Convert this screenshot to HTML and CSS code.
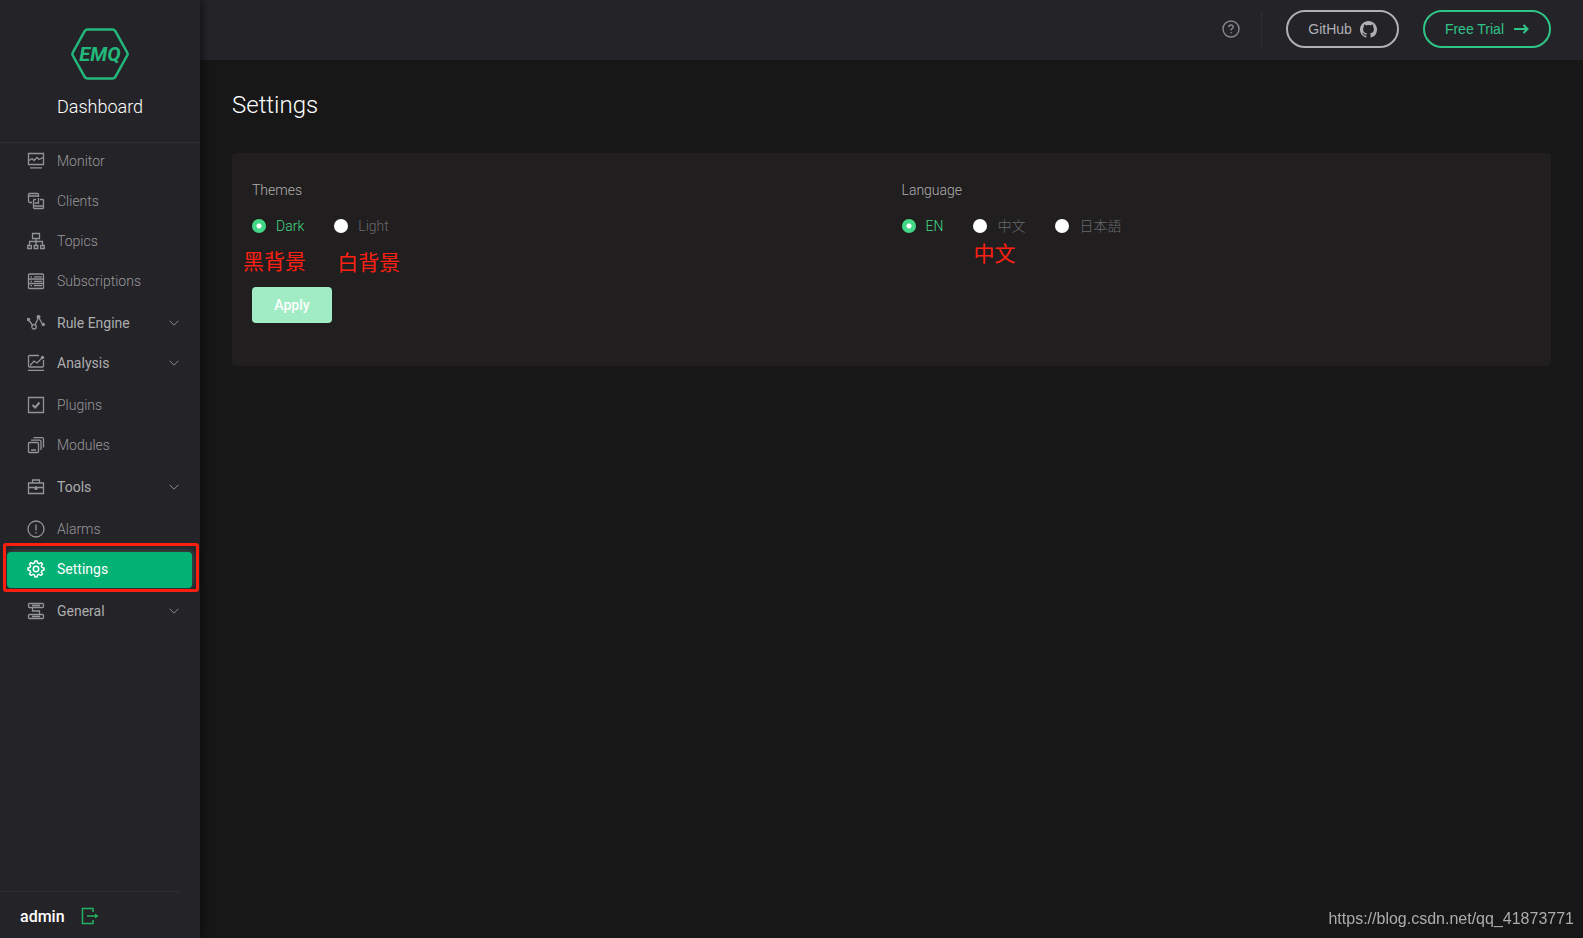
FILE: index.html
```html
<!DOCTYPE html>
<html lang="en">
<head>
  <meta charset="UTF-8" />
  <meta name="viewport" content="width=device-width, initial-scale=1.0"/>
  <title>Dashboard - Settings</title>
  <link rel="stylesheet" href="styles.css">
</head>
<body>
  <aside class="sidebar">
    <div class="brand">
      <svg class="brand-logo" viewBox="0 0 58 52" width="58" height="52">
        <path d="M16.500 1.500h25q1.800 0 2.700 1.500l12 21.500q.8 1.500 0 3l-12 21.500q-.9 1.500-2.700 1.500h-25q-1.800 0-2.700-1.500l-12-21.500q-.8-1.500 0-3l12-21.500q.9-1.500 2.700-1.500z"/>
        <text x="29" y="33" text-anchor="middle">EMQ</text>
      </svg>
      <div class="brand-name">Dashboard</div>
    </div>

    <nav class="menu">
      <div class="menu-group">
        <a href="#" class="menu-item">
          <svg class="icon" viewBox="0 0 18 18"><path d="M1.500 1.500h15v11h-15zM3 15.800h12M2 8.500l3-2 2 2 3-3 2 2 4-2"/></svg>
          <span>Monitor</span>
        </a>
        <a href="#" class="menu-item">
          <svg class="icon" viewBox="0 0 18 18"><path d="M5 10.500H3q-1.500 0-1.500-1.500V2.500q0-1 1-1h8q1 0 1 1V5M1.500 4h10M9 7.500H7.500q-1 0-1 1v7q0 1 1 1h8q1 0 1-1v-7q0-1-1-1H13M11.500 6v5h-4M7 14h9"/></svg>
          <span>Clients</span>
        </a>
        <a href="#" class="menu-item">
          <svg class="icon" viewBox="0 0 18 18"><path d="M5.500 1.500h7v5h-7zM9 6.500v7M2.500 13V9.500h13V13M.7 13.500h3.600v3H.7zM7.200 13.500h3.600v3H7.200zM13.700 13.500h3.600v3h-3.600z"/></svg>
          <span>Topics</span>
        </a>
        <a href="#" class="menu-item">
          <svg class="icon" viewBox="0 0 18 18"><path d="M2.500 2h13q1 0 1 1v12.500q0 1-1 1h-13q-1 0-1-1V3q0-1 1-1zM1.500 7h15M1.500 11.500h15M7 4.800h8M7 9.300h8M7 13.700h8M3.500 4.800h1.500M3.500 9.300h1.500M3.500 13.700h1.500"/></svg>
          <span>Subscriptions</span>
        </a>
      </div>
      <div class="menu-group">
        <a href="#" class="menu-item menu-parent">
          <svg class="icon" viewBox="0 0 18 18"><path d="M2 6.500l3.500 4.500M8 11L11 4.500M12 4l4 7"/><circle class="dot" cx="1.500" cy="5.500" r="1.700"/><circle class="dot" cx="11.500" cy="3" r="2"/><circle class="dot" cx="16.300" cy="10.500" r="1.700"/><circle cx="7" cy="12.800" r="2.200"/></svg>
          <span>Rule Engine</span>
          <svg class="arrow" viewBox="0 0 10 6"><path d="M.5.7L5 5.200 9.500.7"/></svg>
        </a>
        <a href="#" class="menu-item menu-parent">
          <svg class="icon" viewBox="0 0 18 18"><path d="M12 1.500H2.500q-1 0-1 1v9.500q0 1 1 1h13q1 0 1-1V6M1 16.300h16M3 11.500L7 7l3 2 5.500-5.500"/><circle class="dot" cx="15.500" cy="3.500" r="1.700"/></svg>
          <span>Analysis</span>
          <svg class="arrow" viewBox="0 0 10 6"><path d="M.5.7L5 5.200 9.500.7"/></svg>
        </a>
      </div>
      <div class="menu-group">
        <a href="#" class="menu-item">
          <svg class="icon" viewBox="0 0 18 18"><path d="M1.500 1.500h15v15h-15z"/><path class="thick" d="M5.500 9l2.700 2.500L12.500 6.500"/></svg>
          <span>Plugins</span>
        </a>
        <a href="#" class="menu-item">
          <svg class="icon" viewBox="0 0 18 18"><path d="M2.500 6.500h8q1 0 1 1v8q0 1-1 1h-8q-1 0-1-1v-8q0-1 1-1zM4 14h5M4 4.200h8.500q1.500 0 1.500 1.500V14M6.500 1.700H15q1.500 0 1.500 1.500v8.300"/></svg>
          <span>Modules</span>
        </a>
      </div>
      <div class="menu-group">
        <a href="#" class="menu-item menu-parent">
          <svg class="icon" viewBox="0 0 18 18"><path d="M1.500 5h15v10.500h-15zM5.500 5V2h7v3M1.500 9.500h15M9 8v4M7.500 11h3"/></svg>
          <span>Tools</span>
          <svg class="arrow" viewBox="0 0 10 6"><path d="M.5.7L5 5.200 9.500.7"/></svg>
        </a>
      </div>
      <div class="menu-group">
        <a href="#" class="menu-item">
          <svg class="icon" viewBox="0 0 18 18"><circle cx="9" cy="9" r="8"/><path d="M9 4.500v6M9 12v1.500"/></svg>
          <span>Alarms</span>
        </a>
        <a href="#" class="menu-item active">
          <svg class="icon" viewBox="0 0 18 18"><path d="M7.400 3L8 1h2l.6 2 1.500.6 1.900-1 1.400 1.400-1 1.900.6 1.500 2 .6v2l-2 .6-.6 1.500 1 1.900-1.400 1.400-1.900-1-1.500.6-.6 2H8l-.6-2-1.500-.6-1.900 1L2.600 14l1-1.900L3 10.600 1 10V8l2-.6.6-1.500-1-1.900L4 2.600l1.900 1z"/><circle cx="9" cy="9" r="2.700"/></svg>
          <span>Settings</span>
        </a>
      </div>
      <div class="menu-group">
        <a href="#" class="menu-item menu-parent">
          <svg class="icon" viewBox="0 0 18 18"><path d="M2.500 1.500h13q1 0 1 1v2q0 1-1 1h-13q-1 0-1-1v-2q0-1 1-1zM2.500 12.500h13q1 0 1 1v2q0 1-1 1h-13q-1 0-1-1v-2q0-1 1-1zM5 3.500h8M5 14.500h8M5.500 5.500V9h7v3.500"/></svg>
          <span>General</span>
          <svg class="arrow" viewBox="0 0 10 6"><path d="M.5.7L5 5.200 9.500.7"/></svg>
        </a>
      </div>
    </nav>
    <div class="mark-frame"></div>

    <div class="user">
      <span>admin</span>
      <a href="#" class="logout" title="Log out">
        <svg viewBox="0 0 18 18" width="18" height="18"><path d="M12 5V1.500H1.500v15H12V13M6 9h9"/><path class="dot" d="M14 6.500L17.500 9 14 11.500z"/></svg>
      </a>
    </div>
  </aside>

  <div class="page">
    <header class="topbar">
      <a href="#" class="help" title="Help">
        <svg viewBox="0 0 18 18" width="18" height="18"><circle cx="9" cy="9" r="8"/><path d="M6.800 7.300q0-2.300 2.200-2.300t2.200 2q0 1-1.100 1.700T9 10.500M9 12v1.300"/></svg>
      </a>
      <a href="#" class="btn-link github">
        <span>GitHub</span>
        <svg viewBox="0 0 16 16" width="17" height="17"><path d="M8 0C3.580 0 0 3.580 0 8c0 3.540 2.290 6.530 5.470 7.590.4.070.55-.17.55-.38 0-.19-.01-.82-.01-1.490-2.010.37-2.530-.49-2.690-.94-.09-.23-.48-.94-.82-1.130-.28-.15-.68-.52-.01-.53.63-.01 1.080.58 1.230.82.72 1.210 1.870.87 2.330.66.07-.52.28-.87.51-1.070-1.780-.2-3.640-.89-3.640-3.950 0-.87.31-1.590.82-2.150-.08-.2-.36-1.020.08-2.120 0 0 .67-.21 2.200.82.64-.18 1.320-.27 2-.27s1.360.09 2 .27c1.530-1.040 2.200-.82 2.200-.82.44 1.100.16 1.920.08 2.120.51.56.82 1.270.82 2.150 0 3.070-1.870 3.750-3.650 3.950.29.25.54.73.54 1.480 0 1.070-.01 1.930-.01 2.200 0 .21.15.46.55.38A8.010 8.010 0 0 0 16 8c0-4.420-3.580-8-8-8z"/></svg>
      </a>
      <a href="#" class="btn-link trial">
        <span>Free Trial</span>
        <svg viewBox="0 0 15 10" width="15" height="10"><path d="M0 5h13.500M9.500 1l4 4-4 4"/></svg>
      </a>
    </header>

    <main class="content">
      <h1>Settings</h1>
      <form class="card">
        <div class="row">
          <fieldset>
            <legend>Themes</legend>
            <div class="options">
              <label class="radio"><input type="radio" name="theme" checked><span>Dark</span><em class="note note-dark">黑背景</em></label>
              <label class="radio"><input type="radio" name="theme"><span>Light</span><em class="note note-light">白背景</em></label>
            </div>
          </fieldset>
          <fieldset>
            <legend>Language</legend>
            <div class="options">
              <label class="radio"><input type="radio" name="lang" checked><span>EN</span></label>
              <label class="radio"><input type="radio" name="lang"><span>中文</span><em class="note note-zh">中文</em></label>
              <label class="radio"><input type="radio" name="lang"><span>日本語</span></label>
            </div>
          </fieldset>
        </div>
        <button type="button" class="btn-apply">Apply</button>
      </form>
    </main>
  </div>

  <div class="watermark">https://blog.csdn.net/qq_41873771</div>
</body>
</html>
```

FILE: styles.css
```css
* {
  margin: 0;
  padding: 0;
  box-sizing: border-box;
}

body {
  display: flex;
  min-height: 100vh;
  background: #171717;
  color: #fff;
  font-family: Roboto, "Noto Sans CJK SC", sans-serif;
  font-size: 14px;
}

a {
  color: inherit;
  text-decoration: none;
}

svg {
  fill: none;
  stroke: currentColor;
  flex-shrink: 0;
}

svg .dot {
  fill: currentColor;
  stroke: none;
}

/* Sidebar */
.sidebar {
  position: relative;
  z-index: 2;
  display: flex;
  flex-direction: column;
  flex-shrink: 0;
  width: 200px;
  background: #242328;
  box-shadow: 2px 0 8px rgba(0, 0, 0, 0.5);
}

.brand {
  display: flex;
  flex-direction: column;
  align-items: center;
  gap: 15px;
  height: 142px;
  padding-top: 28px;
  box-shadow: 0 1px 0 #2e2e33;
}

.brand-logo {
  color: #23b87b;
  stroke-width: 2.5;
}

.brand-logo text {
  fill: currentColor;
  stroke: none;
  font-size: 20px;
  font-weight: 700;
  font-style: italic;
}

.brand-name {
  font-size: 18px;
  line-height: 24px;
  font-weight: 300;
}

.menu {
  display: flex;
  flex-direction: column;
  gap: 2px;
  flex: 1;
}

.menu-group {
  display: flex;
  flex-direction: column;
}

.menu-item {
  display: flex;
  align-items: center;
  height: 36px;
  margin: 2px 8px 2px 7px;
  padding: 0 13px 2px 20px;
  border-radius: 4px;
  color: #98989a;
  font-weight: 300;
}

.menu-item span {
  flex: 1;
  margin-left: 12px;
}

.menu-parent {
  color: #adadaf;
  font-weight: 400;
}

.icon {
  width: 18px;
  height: 18px;
  color: #929597;
  stroke-width: 1.3;
}

.icon .thick {
  stroke-width: 2;
}

.arrow {
  width: 10px;
  height: 6px;
  color: #8e8e90;
}

.menu-item.active {
  background: #02b274;
  color: #fff;
  font-weight: 400;
  box-shadow: 1px -1px 6px rgba(90, 130, 115, 0.5);
}

.active .icon {
  color: #fff;
  stroke-width: 1.5;
}

.mark-frame {
  position: absolute;
  top: 543px;
  left: 3px;
  right: 1px;
  height: 49px;
  border: 3px solid #fb1f10;
  border-radius: 3px;
  pointer-events: none;
}

.user {
  display: flex;
  align-items: center;
  gap: 16px;
  height: 47px;
  margin-right: 20px;
  padding: 2px 0 0 20px;
  border-top: 1px solid #2e2e33;
  font-size: 16px;
  font-weight: 500;
}

.logout {
  display: flex;
  color: #22b35e;
}

.logout svg {
  stroke-width: 1.5;
}

/* Page */
.page {
  flex: 1;
  min-width: 0;
}

.topbar {
  display: flex;
  align-items: center;
  justify-content: flex-end;
  gap: 24px;
  height: 60px;
  padding: 0 32px 2px;
  background: #242328;
}

.help {
  display: flex;
  align-items: center;
  height: 35px;
  padding-right: 21px;
  border-right: 1px solid #2e2e33;
  color: #85878c;
}

.help svg {
  stroke-width: 1.4;
}

.btn-link {
  display: flex;
  align-items: center;
  height: 38px;
  padding: 0 20px;
  border: 2px solid currentColor;
  border-radius: 19px;
  font-family: "Liberation Sans", Arial, sans-serif;
}

.github {
  gap: 8px;
  color: #b0b0b4;
}

.github svg {
  fill: currentColor;
  stroke: none;
}

.trial {
  gap: 10px;
  color: #30c588;
}

.trial svg {
  stroke-width: 2;
}

.content {
  padding: 29px 32px;
}

.content h1 {
  margin-bottom: 32px;
  font-size: 24px;
  line-height: 32px;
  font-weight: 300;
}

.card {
  padding: 27px 20px 43px;
  border-radius: 4px;
  background: #201e1f;
}

.row {
  display: grid;
  grid-template-columns: 1fr 1fr;
  gap: 20px;
}

fieldset {
  border: none;
}

legend {
  color: #b0b0b0;
  line-height: 20px;
  font-weight: 300;
}

.options {
  display: flex;
  gap: 30px;
  margin-top: 16px;
}

.radio {
  position: relative;
  display: flex;
  align-items: center;
  gap: 10px;
  height: 20px;
  color: #686a6e;
  font-weight: 300;
  line-height: 20px;
}

.radio input {
  appearance: none;
  width: 14px;
  height: 14px;
  border-radius: 50%;
  background: #fff;
}

.radio input:checked {
  background: radial-gradient(circle, #fff 2px, #42d885 3px);
}

.radio input:checked + span {
  color: #42d885;
}

/* Red notes laid over the form */
.note {
  position: absolute;
  color: #ff2012;
  font-size: 21px;
  font-style: normal;
  font-weight: 400;
  line-height: 24px;
  white-space: nowrap;
}

.note-dark {
  top: 34px;
  left: -9px;
}

.note-light {
  top: 35px;
  left: 3px;
}

.note-zh {
  top: 26px;
  left: 0;
}

.btn-apply {
  width: 80px;
  height: 36px;
  margin-top: 51px;
  border: none;
  border-radius: 4px;
  background: #a1ecc4;
  color: #fff;
  font-family: inherit;
  font-size: 14px;
  font-weight: 500;
}

.watermark {
  position: fixed;
  right: 9px;
  bottom: 8px;
  color: #acacac;
  font-family: "Liberation Sans", Arial, sans-serif;
  font-size: 16px;
  line-height: 22px;
}
```
